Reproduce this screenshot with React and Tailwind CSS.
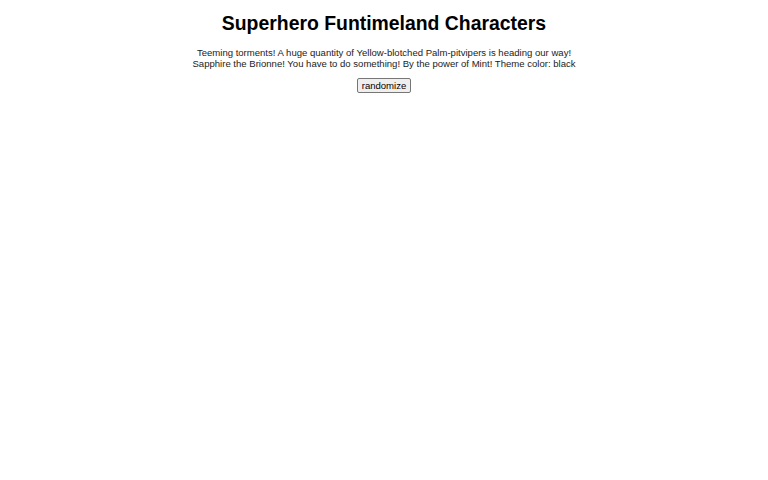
export default function App() {
  return (
    <div className="min-h-[480px] bg-white text-center text-black font-['Liberation_Sans',Arial,sans-serif]">
      <h1 className="pt-[12px] text-[19.4px] leading-[23px] font-bold">
        Superhero Funtimeland Characters
      </h1>
      <p className="mt-[12px] text-[9.55px] leading-[11px] text-[#222]">
        Teeming torments! A huge quantity of Yellow-blotched Palm-pitvipers is heading our way!
        <br />
        Sapphire the Brionne! You have to do something! By the power of Mint! Theme color: black
      </p>
      <button className="mt-[9px] px-[4px] h-[15px] text-[9.55px] leading-[12px] bg-[#efefef] border border-[#767676] rounded-[2px]">
        randomize
      </button>
    </div>
  );
}
